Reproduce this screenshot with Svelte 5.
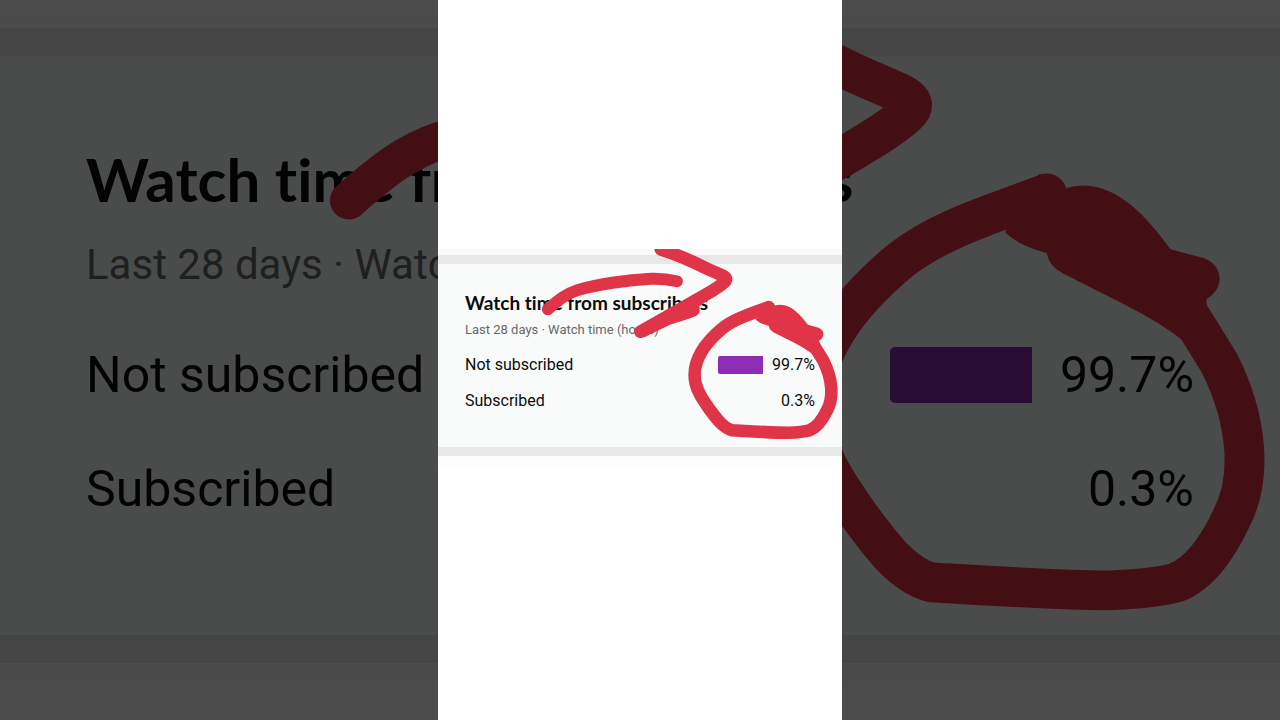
<script>
  const report = {
    title: 'Watch time from subscribers',
    period: 'Last 28 days · Watch time (hours)',
    rows: [
      { label: 'Not subscribed', value: 99.7 },
      { label: 'Subscribed', value: 0.3 }
    ]
  };
</script>

{#snippet card()}
  <section class="card">
    <h2>{report.title}</h2>
    <p class="period">{report.period}</p>
    <table>
      <tbody>
        {#each report.rows as row}
          <tr>
            <th scope="row">{row.label}</th>
            <td>
              <div class="amount">
                <span class="track">
                  {#if row.value > 1}
                    <span class="bar" style="width: {Math.round(row.value)}%"></span>
                  {/if}
                </span>
                <span>{row.value}%</span>
              </div>
            </td>
          </tr>
        {/each}
      </tbody>
    </table>
  </section>

  <!-- red marker: arrow and circle -->
  <svg class="marker" viewBox="0 8 1280 703" aria-hidden="true">
    <g fill="none" stroke="#e03448" stroke-width="40" stroke-linecap="round" stroke-linejoin="round">
      <path d="M348 199C382 169 406 150 440 139C500 120 600 106 676 102C705 101 735 105 757 110" stroke-width="38" />
      <path d="M706 9C760 26 800 44 842 65C866 77 885 84 904 93Q920 102 907 113C888 130 864 143 842 156L740 214L641 270" />
      <path d="M1048 192C995 212 940 228 900 260C850 302 813 350 813 407C813 450 838 484 862 518C882 545 903 574 932 582C985 585 1060 590 1110 590C1140 589 1160 587 1178 582C1203 572 1220 545 1233 518C1254 478 1250 420 1221 362L1190 312" />
    </g>
    <g fill="#e03448">
      <path d="M648 250L850 150L864 160L828 190Q834 210 818 220C790 232 760 238 735 248L652 288Z" />
      <path d="M1040 173Q1060 170 1067 187C1110 173 1146 212 1172 248L1206 257C1226 265 1226 288 1208 298L1210 325L1184 339C1152 314 1112 297 1064 272Q1050 265 1048 252C1030 246 1018 242 1006 231Z" />
    </g>
  </svg>
{/snippet}

<main>
  <div class="backdrop" aria-hidden="true">
    <div class="shot large">{@render card()}</div>
  </div>
  <div class="phone">
    <div class="shot">{@render card()}</div>
  </div>
</main>

<style>
  :global(body) {
    margin: 0;
  }

  main {
    position: relative;
    display: flex;
    justify-content: center;
    min-height: 100vh;
    overflow: hidden;
    background: #fff;
    font-family: Roboto, "Liberation Sans", sans-serif;
    color: #0c0c0c;
  }

  .backdrop {
    position: absolute;
    inset: 0;
    display: flex;
    align-items: center;
  }

  .backdrop::after {
    content: "";
    position: absolute;
    inset: 0;
    background: rgba(0, 0, 0, 0.7);
  }

  .phone {
    position: relative;
    display: flex;
    align-items: center;
    width: 404px;
    max-width: 100%;
    background: #fff;
  }

  .shot {
    --side: 27px;
    --band: 9px;
    --title: 19px;
    --title-line: 26px;
    --small: 13px;
    --small-line: 20px;
    --text: 16px;
    --row: 36px;
    --track: 45px;
    --bar: 18px;
    --bar-gap: 9px;
    position: relative;
    width: 100%;
    padding: 6px 0 15px;
    overflow: hidden;
    background: linear-gradient(#fafbfa 95%, #fff);
  }

  .card {
    padding: 26px var(--side) 28px;
    border: solid #e7e8e7;
    border-width: var(--band) 0;
    background: #f8fbfa;
  }

  h2 {
    margin: 0 0 4px;
    font: 700 var(--title)/var(--title-line) Lato, sans-serif;
    font-variant-ligatures: none;
    white-space: nowrap;
  }

  .period {
    margin: 0 0 7px;
    font-size: var(--small);
    line-height: var(--small-line);
    color: #666968;
    white-space: nowrap;
  }

  table {
    width: 100%;
    border-collapse: collapse;
    font-size: var(--text);
    line-height: var(--row);
  }

  th,
  td {
    height: var(--row);
    padding: 0;
    font-weight: 400;
    text-align: left;
    white-space: nowrap;
  }

  .amount {
    display: flex;
    justify-content: flex-end;
    align-items: center;
    gap: var(--bar-gap);
  }

  .track {
    width: var(--track);
    height: var(--bar);
  }

  .bar {
    display: block;
    height: 100%;
    border-radius: 2px 0 0 2px;
    background: #8e2cb6;
  }

  .marker {
    position: absolute;
    inset: 0;
    width: 100%;
    height: 100%;
  }

  /* zoomed copy behind the phone column */
  .large {
    --side: 86px;
    --band: 28px;
    --title: 60px;
    --title-line: 82px;
    --small: 42px;
    --small-line: 63px;
    --text: 50px;
    --row: 114px;
    --track: 142px;
    --bar: 56px;
    --bar-gap: 28px;
    padding: 18px 0 48px;
  }

  .large .card {
    padding: 82px var(--side) 89px;
  }

  .large h2 {
    margin-bottom: 13px;
  }

  .large .period {
    margin-bottom: 22px;
  }

  .large .bar {
    border-radius: 5px 0 0 5px;
  }
</style>
